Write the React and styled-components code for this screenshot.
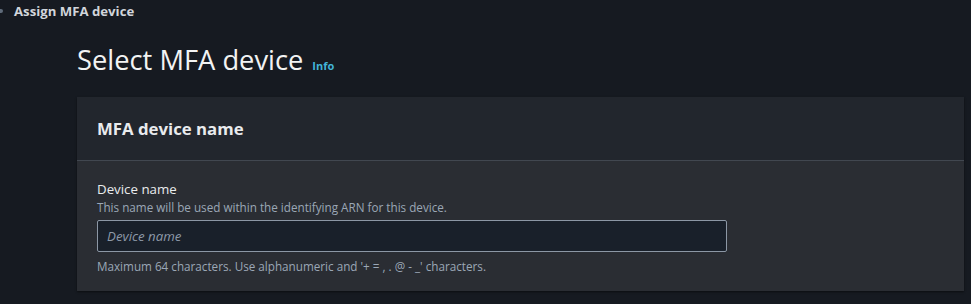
import React from "react";
import styled, { createGlobalStyle } from "styled-components";

const GlobalStyle = createGlobalStyle`
  html, body {
    margin: 0;
    padding: 0;
    background: #161a21;
    font-family: "Open Sans", "Noto Sans", sans-serif;
    color: #e9ebed;
  }
`;

const Page = styled.div`
  width: 971px;
  height: 304px;
  overflow: hidden;
  background: #161a21;
`;

const Breadcrumb = styled.nav`
  display: flex;
  align-items: center;
  gap: 11px;
  height: 22px;
  font-size: 13.2px;
  font-weight: 700;
  color: #d1d5db;
`;

const Dot = styled.span`
  width: 3px;
  height: 4px;
  border-radius: 0 2px 2px 0;
  background: #5f6b7a;
`;

const Main = styled.main`
  padding: 17px 7px 0 77px;
`;

const TitleRow = styled.div`
  display: flex;
  align-items: baseline;
  gap: 9px;
  height: 58px;
`;

const Title = styled.h1`
  margin: 0;
  font-size: 27.3px;
  font-weight: 400;
  color: #f2f3f3;
  line-height: 42px;
`;

const InfoLink = styled.a`
  font-size: 11px;
  font-weight: 700;
  color: #42b4d8;
  text-decoration: none;
`;

const Card = styled.section`
  background: #2a2d33;
  box-shadow: 0 1px 2px rgba(0, 0, 0, 0.5);
`;

const CardHeader = styled.header`
  background: #22262d;
  height: 63px;
  display: flex;
  align-items: center;
  padding: 0 20px;
  border-bottom: 1px solid #414750;
`;

const CardTitle = styled.h2`
  margin: 0;
  font-size: 16.8px;
  font-weight: 700;
  color: #e9ebed;
`;

const CardBody = styled.div`
  padding: 18px 20px 18px;
  height: 130px;
  box-sizing: border-box;
`;

const Label = styled.label`
  display: block;
  font-size: 13.3px;
  color: #e9ebed;
  line-height: 20px;
`;

const Hint = styled.div`
  font-size: 11.7px;
  color: #9ba7b6;
  line-height: 17px;
  margin-top: ${({ $top }) => $top || 0}px;
`;

const Input = styled.input`
  display: block;
  box-sizing: border-box;
  width: 630px;
  height: 32px;
  margin-top: 4px;
  padding: 0 9px;
  background: #19202a;
  border: 1px solid #8c97a5;
  border-radius: 2px;
  color: #e9ebed;
  font-family: inherit;
  font-size: 13.3px;
  outline: none;

  &::placeholder {
    color: #8d99a8;
    font-style: italic;
  }
`;

export default function App() {
  return (
    <Page>
      <GlobalStyle />
      <Breadcrumb>
        <Dot />
        <span>Assign MFA device</span>
      </Breadcrumb>
      <Main>
        <TitleRow>
          <Title>Select MFA device</Title>
          <InfoLink href="#">Info</InfoLink>
        </TitleRow>
        <Card>
          <CardHeader>
            <CardTitle>MFA device name</CardTitle>
          </CardHeader>
          <CardBody>
            <Label>Device name</Label>
            <Hint>This name will be used within the identifying ARN for this device.</Hint>
            <Input placeholder="Device name" />
            <Hint $top={6}>
              Maximum 64 characters. Use alphanumeric and '+ = , . @ - _' characters.
            </Hint>
          </CardBody>
        </Card>
      </Main>
    </Page>
  );
}
